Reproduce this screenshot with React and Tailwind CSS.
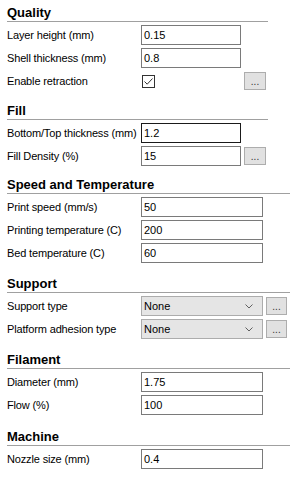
import React from "react";

const font = { fontFamily: '"Liberation Sans", Arial, sans-serif' };

function Heading({ children, lineW, mt }) {
  return (
    <div className={mt}>
      <div
        className="pt-[5px] pl-[7px] leading-[16px] text-[13px] font-bold text-black"
      >
        {children}
      </div>
      <div className={"ml-[7px] h-px bg-[#a0a0a0] " + lineW} />
    </div>
  );
}

function Label({ children }) {
  return (
    <div className="w-[141px] shrink-0 pl-[7px] text-[11px] leading-[20px] tracking-[-0.15px] text-black whitespace-nowrap">
      {children}
    </div>
  );
}

function Input({ value, w, dark }) {
  return (
    <div
      className={
        "h-[20px] border bg-white pl-[2px] text-[11px] leading-[18px] text-black " +
        w +
        (dark ? " border-[#1a1a1a]" : " border-[#7a7a7a]")
      }
    >
      {value}
    </div>
  );
}

function Dots({ w }) {
  return (
    <div
      className={
        "ml-[3px] flex h-[18px] items-center justify-center border border-[#adadad] bg-[#e1e1e1] text-[10px] leading-none text-[#333] " +
        w
      }
    >
      <span className="relative top-[1px]">...</span>
    </div>
  );
}

function Select({ value }) {
  return (
    <div className="flex h-[20px] w-[122px] items-center justify-between border border-[#acacac] bg-[#e5e5e5] pl-[2px] pr-[9px] text-[11px] text-black">
      <span>{value}</span>
      <svg width="8" height="5" viewBox="0 0 8 5">
        <path d="M0.5 0.5 L4 4 L7.5 0.5" fill="none" stroke="#606060" strokeWidth="1" />
      </svg>
    </div>
  );
}

function Row({ label, children }) {
  return (
    <div className="flex h-[20px] items-center">
      <Label>{label}</Label>
      {children}
    </div>
  );
}

function Rows({ children }) {
  return <div className="flex flex-col gap-[3px] pt-[3px]">{children}</div>;
}

export default function App() {
  return (
    <div className="h-[480px] w-[298px] overflow-hidden bg-white" style={font}>
      <Heading lineW="w-[261px]">Quality</Heading>
      <Rows>
        <Row label="Layer height (mm)">
          <Input value="0.15" w="w-[100px]" />
        </Row>
        <Row label="Shell thickness (mm)">
          <Input value="0.8" w="w-[100px]" />
        </Row>
        <Row label="Enable retraction">
          <div className="flex w-[100px] items-center pl-[1px]">
            <div className="flex h-[13px] w-[13px] items-center justify-center border border-[#333] bg-white">
              <svg width="11" height="11" viewBox="0 0 11 11">
                <path d="M1.5 5.5 L4.2 8.2 L9.5 2.5" fill="none" stroke="#333" strokeWidth="1" />
              </svg>
            </div>
          </div>
          <Dots w="w-[22px]" />
        </Row>
      </Rows>

      <Heading lineW="w-[261px]" mt="mt-[7px]">Fill</Heading>
      <Rows>
        <Row label="Bottom/Top thickness (mm)">
          <Input value="1.2" w="w-[100px]" dark />
        </Row>
        <Row label="Fill Density (%)">
          <Input value="15" w="w-[100px]" />
          <Dots w="w-[22px]" />
        </Row>
      </Rows>

      <Heading lineW="w-[283px]" mt="mt-[6px]">Speed and Temperature</Heading>
      <Rows>
        <Row label="Print speed (mm/s)">
          <Input value="50" w="w-[122px]" />
        </Row>
        <Row label="Printing temperature (C)">
          <Input value="200" w="w-[122px]" />
        </Row>
        <Row label="Bed temperature (C)">
          <Input value="60" w="w-[122px]" />
        </Row>
      </Rows>

      <Heading lineW="w-[283px]" mt="mt-[8px]">Support</Heading>
      <Rows>
        <Row label="Support type">
          <Select value="None" />
          <Dots w="w-[21px]" />
        </Row>
        <Row label="Platform adhesion type">
          <Select value="None" />
          <Dots w="w-[21px]" />
        </Row>
      </Rows>

      <Heading lineW="w-[283px]" mt="mt-[8px]">Filament</Heading>
      <Rows>
        <Row label="Diameter (mm)">
          <Input value="1.75" w="w-[122px]" />
        </Row>
        <Row label="Flow (%)">
          <Input value="100" w="w-[122px]" />
        </Row>
      </Rows>

      <Heading lineW="w-[283px]" mt="mt-[9px]">Machine</Heading>
      <Rows>
        <Row label="Nozzle size (mm)">
          <Input value="0.4" w="w-[122px]" />
        </Row>
      </Rows>
    </div>
  );
}
